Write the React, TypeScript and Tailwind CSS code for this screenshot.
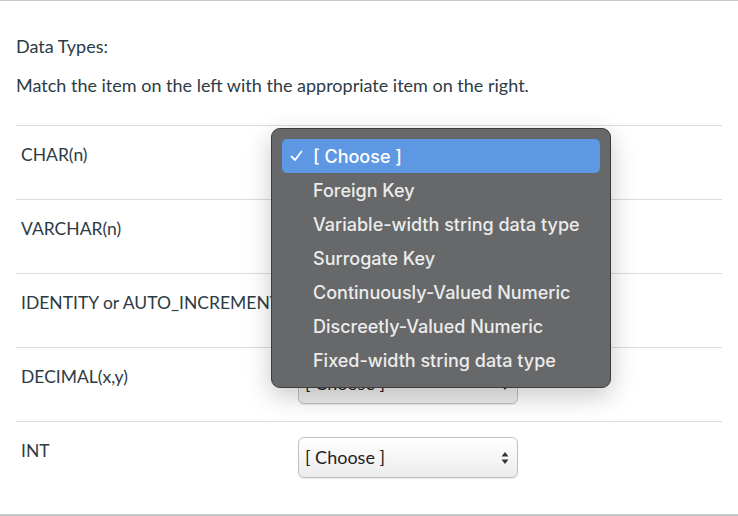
import React from "react";

const rows = ["CHAR(n)", "VARCHAR(n)", "IDENTITY or AUTO_INCREMENT", "DECIMAL(x,y)", "INT"];

const options = [
  "[ Choose ]",
  "Foreign Key",
  "Variable-width string data type",
  "Surrogate Key",
  "Continuously-Valued Numeric",
  "Discreetly-Valued Numeric",
  "Fixed-width string data type",
];

function Select() {
  return (
    <div className="w-[220px] h-[41px] rounded-[6px] border border-[#c2c2c2] bg-gradient-to-b from-white to-[#ececec] shadow-[0_1px_1px_rgba(0,0,0,0.1)] flex items-center justify-between pl-[6px] pr-[8px]">
      <span className="text-[18px] text-[#222] font-['Lato',sans-serif]">[ Choose ]</span>
      <svg width="8" height="14" viewBox="0 0 8 14" className="text-[#333]">
        <path d="M4 1 L7.5 5.5 H0.5 Z" fill="currentColor" />
        <path d="M4 13 L7.5 8.5 H0.5 Z" fill="currentColor" />
      </svg>
    </div>
  );
}

export default function App() {
  return (
    <div className="relative w-[738px] h-[516px] bg-white overflow-hidden flex flex-col border-t border-[#c4c8cc] font-['Lato',sans-serif] text-[#2d3b45]">
      <div className="px-4 flex flex-col flex-1">
        <p className="mt-[35px] text-[18px] leading-[20px]">Data Types:</p>
        <p className="mt-[19px] text-[18px] leading-[20px]">
          Match the item on the left with the appropriate item on the right.
        </p>
        <div className="mt-[30px] flex flex-col flex-1">
          {rows.map((label, i) => (
            <div
              key={label}
              className={`flex border-t border-[#dcdcdc] pt-[15px] ${i === rows.length - 1 ? "flex-1" : "h-[74px]"}`}
            >
              <div className="w-[282px] pl-[5px] pt-[4px] text-[17.5px] leading-[20px] whitespace-nowrap overflow-hidden">
                {label}
              </div>
              <Select />
            </div>
          ))}
        </div>
      </div>
      <div className="h-[2px] bg-[#c4c8cc]" />

      <div className="absolute left-[271px] top-[127px] w-[340px] h-[260px] rounded-[9px] bg-[#676869] border border-[#3c3c3c] shadow-[0_8px_26px_rgba(0,0,0,0.22)] p-[10px] font-['Inter',sans-serif]">
        {options.map((opt, i) => (
          <div
            key={opt}
            className={`relative h-[34px] flex items-center pl-[31px] rounded-[5px] text-[18px] font-medium ${i === 0 ? "bg-[#5e97e2] text-white" : "text-[#ececec]"}`}
          >
            {i === 0 && (
              <svg width="13" height="12" viewBox="0 0 13 12" className="absolute left-[8px] top-[11px]">
                <path d="M1.5 6.5 L5 10 L11.5 1.5" fill="none" stroke="white" strokeWidth="1.8" strokeLinecap="round" strokeLinejoin="round" />
              </svg>
            )}
            {opt}
          </div>
        ))}
      </div>
    </div>
  );
}
